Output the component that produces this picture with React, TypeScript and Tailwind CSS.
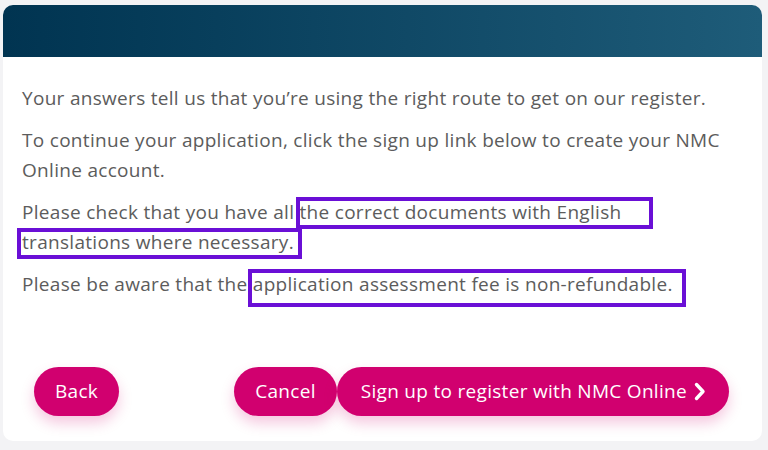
const Box = ({ children, className }: { children: React.ReactNode; className: string }) => (
  <span className="relative">
    {children}
    <span className={`pointer-events-none absolute border-4 border-[#6a0fd6] ${className}`} />
  </span>
);

const Chevron = () => (
  <svg width="13" height="19" viewBox="0 0 13 19" fill="none" stroke="currentColor" strokeWidth="3.4" strokeLinecap="round" strokeLinejoin="round">
    <polyline points="3.5,2.5 10,9.5 3.5,16.5" />
  </svg>
);

const App = () => {
  return (
    <div className="min-h-[450px] bg-[#f3f3f5] pt-[5px] pl-[3px] pr-[6px] pb-[7px] font-['Open_Sans',sans-serif] tracking-[0.3px]">
      <div className="rounded-[10px] bg-white overflow-hidden">
        {/* Header band */}
        <div className="h-[52px] bg-gradient-to-r from-[#013451] to-[#1e5c79]" />

        {/* Body */}
        <div className="pt-[26px] pb-[25px] pl-[19px] pr-[20px]">
          <div className="text-[19px] leading-[30px] text-[#5c5c5c]">
            <p className="mb-[12px]">Your answers tell us that you’re using the right route to get on our register.</p>
            <p className="mb-[12px]">
              To continue your application, click the sign up link below to create your NMC
              <br />
              Online account.
            </p>
            <p className="mb-[12px]">
              Please check that you have all{' '}
              <Box className="-left-[4px] -right-[32px] -top-[2px] -bottom-[4px]">the correct documents with English</Box>
              <br />
              <Box className="-left-[5px] -right-[8px] -top-[1px] -bottom-[4px]">translations where necessary.</Box>
            </p>
            <p>
              Please be aware that the{' '}
              <Box className="-left-[5px] -right-[13px] -top-[2px] -bottom-[10px]">application assessment fee is non-refundable.</Box>
            </p>
          </div>

          {/* Actions */}
          <div className="mt-[68px] flex items-center justify-between pl-[12px] pr-[13px]">
            <button className="h-[49px] rounded-full bg-[#d1006f] px-[21px] text-[19px] text-white shadow-[0_7px_14px_rgba(209,0,111,0.22)]">
              Back
            </button>
            <div className="flex items-center">
              <button className="h-[49px] rounded-full bg-[#d1006f] px-[21px] text-[19px] text-white shadow-[0_7px_14px_rgba(209,0,111,0.22)]">
                Cancel
              </button>
              <button className="flex h-[49px] items-center gap-[6px] rounded-full bg-[#d1006f] pl-[24px] pr-[23px] text-[19px] text-white shadow-[0_7px_14px_rgba(209,0,111,0.22)]">
                Sign up to register with NMC Online
                <Chevron />
              </button>
            </div>
          </div>
        </div>
      </div>
    </div>
  );
};

export default App;
